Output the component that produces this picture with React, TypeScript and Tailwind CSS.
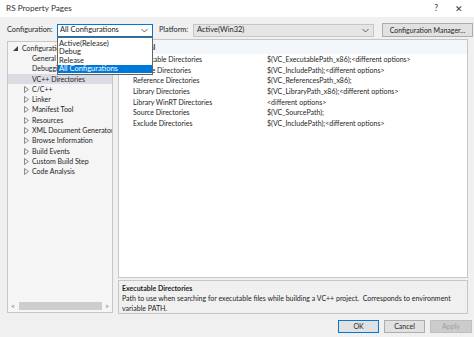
import React from "react";

const treeItems = [
  { label: "General", arrow: false },
  { label: "Debugging", arrow: false },
  { label: "VC++ Directories", arrow: false, selected: true },
  { label: "C/C++", arrow: true },
  { label: "Linker", arrow: true },
  { label: "Manifest Tool", arrow: true },
  { label: "Resources", arrow: true },
  { label: "XML Document Generator", arrow: true },
  { label: "Browse Information", arrow: true },
  { label: "Build Events", arrow: true },
  { label: "Custom Build Step", arrow: true },
  { label: "Code Analysis", arrow: true },
];

const props = [
  ["Executable Directories", "$(VC_ExecutablePath_x86);<different options>"],
  ["Include Directories", "$(VC_IncludePath);<different options>"],
  ["Reference Directories", "$(VC_ReferencesPath_x86);"],
  ["Library Directories", "$(VC_LibraryPath_x86);<different options>"],
  ["Library WinRT Directories", "<different options>"],
  ["Source Directories", "$(VC_SourcePath);"],
  ["Exclude Directories", "$(VC_IncludePath);<different options>"],
];

const configs = ["Active(Release)", "Debug", "Release", "All Configurations"];

const Expanded = () => (
  <svg width="5" height="5" viewBox="0 0 5 5" className="shrink-0">
    <path d="M5 0 L5 5 L0 5 Z" fill="#404040" />
  </svg>
);

const Collapsed = () => (
  <svg width="5" height="7" viewBox="0 0 5 7" className="shrink-0">
    <path d="M0.5 0.5 L4.5 3.5 L0.5 6.5 Z" fill="none" stroke="#8a8a8a" strokeWidth="1" />
  </svg>
);

const Chevron = () => (
  <svg width="7" height="5" viewBox="0 0 7 5">
    <path d="M0.5 1 L3.5 4 L6.5 1" fill="none" stroke="#606060" strokeWidth="1" />
  </svg>
);

export default function App() {
  return (
    <div
      className="relative w-[474px] h-[337px] overflow-hidden bg-[#f0f0f0] text-[7px] text-[#1e1e1e] leading-none"
      style={{ fontFamily: 'Lato, "Noto Sans", sans-serif' }}
    >
      {/* Title bar */}
      <div className="flex items-center h-[17px] bg-white pl-[6px] pr-[11px]">
        <span className="text-[8.2px] text-[#333]">RS Property Pages</span>
        <span className="ml-auto text-[8.5px] text-[#333]">?</span>
        <span className="ml-[17px] text-[9px] text-[#333]">✕</span>
      </div>

      {/* Configuration row */}
      <div className="flex items-center h-[22px] pt-[4px] pl-[7px]">
        <span className="w-[50px] text-[7.3px]">Configuration:</span>
        <div className="flex items-center w-[96px] h-[13px] bg-white border border-[#0078d7] pl-[2px] pr-[4px]">
          <span className="text-[7.5px]">All Configurations</span>
          <span className="ml-auto"><Chevron /></span>
        </div>
        <span className="ml-[6px] w-[34px] text-[7.3px]">Platform:</span>
        <div className="flex items-center w-[181px] h-[13px] bg-[#e5e5e5] border border-[#c6c6c6] pl-[3px] pr-[4px]">
          <span className="text-[7.5px]">Active(Win32)</span>
          <span className="ml-auto"><Chevron /></span>
        </div>
        <div className="ml-[8px] flex items-center justify-center w-[91px] h-[14px] bg-[#e1e1e1] border border-[#adadad]">
          Configuration Manager...
        </div>
      </div>

      {/* Main area */}
      <div className="flex h-[275px] pl-[7px] pr-[6px]">
        {/* Tree */}
        <div className="flex flex-col w-[106px] h-[272px] mt-[2px] bg-[#f5f5f5] border border-[#c6c6c6] overflow-hidden">
          <div className="flex-1 pt-[1px]">
            <div className="flex items-center h-[10.3px] pl-[5px] gap-[4px]">
              <Expanded />
              <span className="whitespace-nowrap">Configuration Properties</span>
            </div>
            {treeItems.map((it) => (
              <div
                key={it.label}
                className={`flex items-center h-[10.3px] pl-[16px] gap-[3px] ${it.selected ? "bg-[#dadbe3]" : ""}`}
              >
                <span className="w-[5px] flex justify-center">{it.arrow ? <Collapsed /> : null}</span>
                <span className="whitespace-nowrap">{it.label}</span>
              </div>
            ))}
          </div>
          <div className="flex items-center h-[10px] mb-[1px] px-[3px] text-[#707070]">
            <span className="text-[7px]">&lt;</span>
            <div className="ml-[4px] w-[83px] h-[8px] bg-[#cdcdcd]" />
            <span className="ml-auto text-[7px]">&gt;</span>
          </div>
        </div>

        {/* Right: grid + description */}
        <div className="flex flex-col flex-1 ml-[5px]">
          <div className="h-[239px] bg-white border border-[#c6c6c6]">
            <div className="flex items-center h-[14px] bg-[#f3f6fa] pl-[3px] gap-[4px]">
              <Expanded />
              <span className="font-bold">General</span>
            </div>
            {props.map(([name, value]) => (
              <div key={name} className="flex items-center h-[10.7px]">
                <span className="w-[148px] pl-[14px] whitespace-nowrap">{name}</span>
                <span className="whitespace-nowrap">{value}</span>
              </div>
            ))}
          </div>
          <div className="mt-[2px] h-[34px] bg-[#f0f0f0] border border-[#c6c6c6] pl-[3px] pt-[2px] leading-[10px]">
            <div className="font-bold">Executable Directories</div>
            <div className="whitespace-nowrap">
              Path to use when searching for executable files while building a VC++ project.&nbsp; Corresponds to environment
            </div>
            <div>variable PATH.</div>
          </div>
        </div>
      </div>

      {/* Buttons */}
      <div className="flex justify-end gap-[5px] mt-[6px] pr-[2px]">
        <div className="flex items-center justify-center w-[41px] h-[13px] bg-[#e1e1e1] border border-[#0078d7]">OK</div>
        <div className="flex items-center justify-center w-[41px] h-[13px] bg-[#e1e1e1] border border-[#adadad]">Cancel</div>
        <div className="flex items-center justify-center w-[42px] h-[13px] bg-[#cccccc] border border-[#bfbfbf] text-[#a0a0a0]">Apply</div>
      </div>

      {/* Configuration dropdown overlay */}
      <div className="absolute left-[57px] top-[37px] w-[96px] bg-white border border-[#646464] pt-[1px] pb-[1px] text-[7.5px]">
        {configs.map((c) => (
          <div
            key={c}
            className={`flex items-center h-[8.5px] pl-[1px] ${c === "All Configurations" ? "bg-[#0078d7] text-white" : ""}`}
          >
            {c}
          </div>
        ))}
      </div>
    </div>
  );
}
